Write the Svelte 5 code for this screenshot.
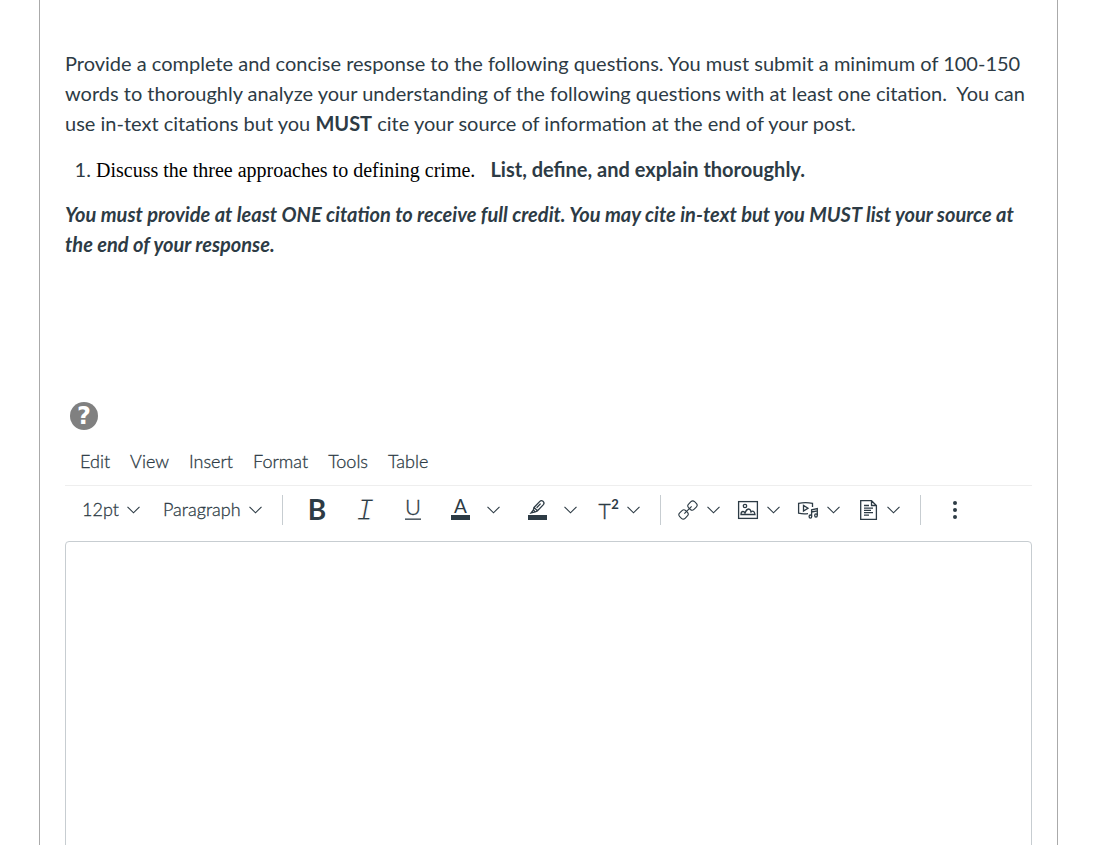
<script lang="ts">
	const menus = ['Edit', 'View', 'Insert', 'Format', 'Tools', 'Table']
	let fontSize = $state('12pt')
	let block = $state('Paragraph')
	let answer = $state('')
</script>

{#snippet chevron()}
	<svg class="chevron" width="13" height="8" viewBox="0 0 13 8" aria-hidden="true">
		<path d="M0.5 0.8 L6.5 6.8 L12.5 0.8" />
	</svg>
{/snippet}

<main>
	<section class="prompt">
		<p>
			Provide a complete and concise response to the following questions. You must submit a minimum of 100-150
			words to thoroughly analyze your understanding of the following questions with at least one citation.&nbsp; You can
			use in-text citations but you <strong>MUST</strong> cite your source of information at the end of your post.
		</p>
		<ol>
			<li>
				<span class="topic">Discuss the three approaches to defining crime.&nbsp;&nbsp;</span>
				<strong>List, define, and explain thoroughly.</strong>
			</li>
		</ol>
		<p>
			<strong><em>You must provide at least ONE citation to receive full credit. You may cite in-text but you MUST list your source at
			the end of your response.</em></strong>
		</p>
	</section>

	<section class="editor">
		<button class="help" type="button" aria-label="Help">?</button>
		<nav>
			{#each menus as menu}
				<button type="button">{menu}</button>
			{/each}
		</nav>
		<div class="toolbar">
			<div class="group selects">
				<label class="size">
					<select aria-label="Font size" bind:value={fontSize}>
						<option>12pt</option>
					</select>
					{@render chevron()}
				</label>
				<label class="block">
					<select aria-label="Block format" bind:value={block}>
						<option>Paragraph</option>
					</select>
					{@render chevron()}
				</label>
			</div>
			<div class="group format">
				<button type="button" class="wide" aria-label="Bold">
					<svg width="20" height="20" viewBox="0 0 20 20"><text class="bold" x="10" y="20">B</text></svg>
				</button>
				<button type="button" class="wide" aria-label="Italic">
					<svg width="20" height="20" viewBox="0 0 20 20"><text class="italic" x="10" y="20">I</text></svg>
				</button>
				<button type="button" class="wide" aria-label="Underline">
					<svg width="20" height="20" viewBox="0 0 20 20">
						<text class="under" x="10" y="15">U</text>
						<rect x="2" y="18.5" width="16" height="1.3" />
					</svg>
				</button>
				<button type="button" class="wide" aria-label="Text color">
					<svg width="20" height="20" viewBox="0 0 20 20">
						<text class="color" x="9.5" y="13">A</text>
						<rect x="0" y="15" width="19" height="5" />
					</svg>
				</button>
				<button type="button" class="caret" aria-label="Text color menu">{@render chevron()}</button>
				<button type="button" class="wide" aria-label="Highlight color">
					<svg width="20" height="20" viewBox="0 0 20 20">
						<path class="line" d="M6 7.5 L11.6 1.6 Q13.2 0 15 1.2 Q16.8 2.8 15.4 4.6 L9.5 10.8 Z M6 7.5 L5.4 9.8 L3 13 L7.2 12 L9.5 10.8 M5.4 9.8 L7.2 12 M8.6 7.8 L12.6 3.6" />
						<rect x="0" y="15" width="19" height="5" />
					</svg>
				</button>
				<button type="button" class="caret" aria-label="Highlight color menu">{@render chevron()}</button>
				<button type="button" class="drop script" aria-label="Superscript">
					<svg width="20" height="20" viewBox="0 0 20 20">
						<text class="tee" x="6.5" y="19">T</text>
						<text class="two" x="17" y="9">2</text>
					</svg>
					{@render chevron()}
				</button>
			</div>
			<div class="group insert">
				<button type="button" class="drop" aria-label="Links">
					<svg width="20" height="20" viewBox="0 0 20 20">
						<g class="line" transform="translate(10 10) rotate(-45) scale(0.86) translate(-10 -10)">
							<path d="M7.6 8.4 Q7.4 5.6 4.6 5.6 H0.8 Q-2.2 5.6 -2.2 8.6 V11.4 Q-2.2 14.4 0.8 14.4 H4.6 Q7.4 14.4 7.6 11.6 M12.4 8.4 Q12.6 5.6 15.4 5.6 H19.2 Q22.2 5.6 22.2 8.6 V11.4 Q22.2 14.4 19.2 14.4 H15.4 Q12.6 14.4 12.4 11.6 M12.4 8.4 V11.6 M7.6 8.4 V11.6" />
							<path d="M4 10 H16" />
						</g>
					</svg>
					{@render chevron()}
				</button>
				<button type="button" class="drop" aria-label="Images">
					<svg width="20" height="20" viewBox="0 0 20 20">
						<rect class="line" x="0.6" y="1.6" width="18.8" height="16.8" />
						<circle class="line" cx="7" cy="6" r="1.7" />
						<path class="line" d="M3 14.5 Q3 11.5 5 11.5 Q6.4 11.5 7 13 Q8.5 9 10.5 9 Q12.5 9 13 12 Q14.5 10.5 15.7 11.5 Q16.7 12.4 17 14.5 Z" />
					</svg>
					{@render chevron()}
				</button>
				<button type="button" class="drop" aria-label="Record or upload media">
					<svg width="20" height="20" viewBox="0 0 20 20">
						<path class="line" d="M14.5 7 V3.3 Q7.5 2 0.6 3.3 V13.2 Q5 14.2 10 13.6 M5.5 5.5 V11 L10 8.2 Z" />
						<path class="line" d="M13.6 16.3 V9.8 L19.3 8.6 V15.2 M13.6 12 L19.3 10.8" />
						<ellipse class="line" cx="12.4" cy="16.6" rx="1.3" ry="1.6" />
						<ellipse class="line" cx="18" cy="15.4" rx="1.3" ry="1.6" />
					</svg>
					{@render chevron()}
				</button>
				<button type="button" class="drop" aria-label="Documents">
					<svg width="20" height="20" viewBox="0 0 20 20">
						<path class="line" d="M2.7 0.7 H13.5 L18.4 5.5 V19.3 H2.7 Z M13.5 0.7 V5.5 H18.4 M6 5.5 H11 M6 8.2 H15 M6 10.4 H13 M6 12.6 H15 M6 15.2 H11" />
					</svg>
					{@render chevron()}
				</button>
			</div>
			<button type="button" class="more" aria-label="More">
				<svg width="20" height="20" viewBox="0 0 20 20">
					<circle cx="10" cy="3" r="2" />
					<circle cx="10" cy="10" r="2" />
					<circle cx="10" cy="17" r="2" />
				</svg>
			</button>
		</div>
		<textarea aria-label="Response" bind:value={answer}></textarea>
	</section>
</main>

<style>
	:global(body) {
		margin: 0;
		background: #fff;
	}
	main {
		margin: 0 41px 0 39px;
		padding: 48px 25px 0;
		border: 1px solid #aaa;
		border-width: 0 1px;
		color: #2d3b45;
		font-family: Lato, "Liberation Sans", sans-serif;
		height: 100vh;
		box-sizing: border-box;
		overflow: hidden;
	}
	.prompt {
		font-size: 20px;
		line-height: 30px;
		p {
			margin: 0;
		}
		ol {
			margin: 16px 0 14px;
			padding-left: 31px;
		}
		.topic {
			font-family: "Liberation Serif", serif;
			color: #000;
		}
	}
	button {
		display: flex;
		align-items: center;
		justify-content: center;
		padding: 0;
		border: 0;
		background: none;
		color: inherit;
		font: inherit;
		cursor: pointer;
	}
	.editor {
		margin-top: 143px;
		font-size: 18px;
		font-weight: 300;
		line-height: 24px;
	}
	.help {
		width: 28px;
		height: 28px;
		margin-left: 5px;
		border-radius: 50%;
		background: #808080;
		color: #fff;
		font: bold 24px/28px "DejaVu Sans", sans-serif;
	}
	nav {
		display: flex;
		gap: 20px;
		margin-top: 19px;
		padding: 0 15px 12px;
		border-bottom: 1px solid #eee;
	}
	nav, select {
		-webkit-text-stroke: 0.3px currentColor;
	}
	.toolbar {
		display: flex;
		align-items: center;
		height: 47px;
		padding-bottom: 8px;
		svg {
			display: block;
			overflow: visible;
			fill: #2d3b45;
		}
	}
	.group {
		display: flex;
		align-items: center;
		height: 30px;
		padding-right: 20px;
		border-right: 1px solid #c7cdd1;
	}
	.selects {
		padding-left: 17px;
		gap: 23px;
		label {
			display: flex;
			align-items: center;
			gap: 8px;
		}
		select {
			appearance: none;
			padding: 0 0 2px;
			border: 0;
			background: none;
			color: inherit;
			font: inherit;
		}
	}
	.format {
		padding-left: 10px;
	}
	.wide {
		width: 48px;
		height: 30px;
	}
	.caret {
		width: 16px;
		height: 30px;
		& + .wide {
			margin-left: 13px;
		}
	}
	.drop {
		gap: 9px;
		height: 30px;
	}
	.script {
		margin-left: 20px;
	}
	.insert {
		padding-left: 17px;
		gap: 18px;
	}
	.more {
		width: 48px;
		height: 30px;
		margin-left: 10px;
	}
	text {
		text-anchor: middle;
	}
	.bold {
		font-size: 28px;
		font-weight: 700;
	}
	.italic {
		font: italic 31px "Liberation Mono", monospace;
		stroke: #fff;
		stroke-width: 1;
	}
	.under {
		font-size: 22px;
		font-weight: 300;
		stroke: #2d3b45;
		stroke-width: 0.3;
	}
	.color {
		font-size: 19px;
		font-weight: 400;
	}
	.tee {
		font-size: 21px;
		font-weight: 300;
		stroke: #2d3b45;
		stroke-width: 0.4;
	}
	.two {
		font-size: 13px;
		font-weight: 700;
	}
	.toolbar .line {
		fill: none;
		stroke: #2d3b45;
		stroke-width: 1.3;
	}
	.toolbar .chevron path {
		fill: none;
		stroke: #2d3b45;
		stroke-width: 1.1;
	}
	textarea {
		display: block;
		width: 100%;
		height: 400px;
		box-sizing: border-box;
		padding: 12px;
		border: 1px solid #c7cdd1;
		border-radius: 4px;
		resize: none;
		color: inherit;
		font: inherit;
	}
</style>
